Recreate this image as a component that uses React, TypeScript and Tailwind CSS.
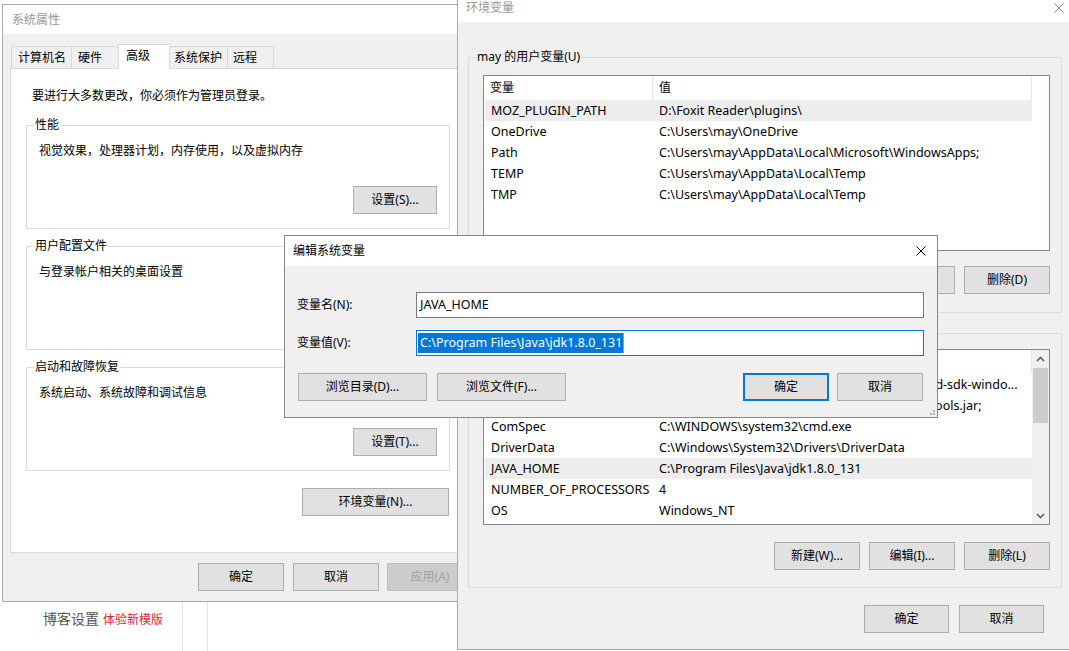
import React from "react";

type Row = [string, string];

const userRows: Row[] = [
  ["MOZ_PLUGIN_PATH", "D:\\Foxit Reader\\plugins\\"],
  ["OneDrive", "C:\\Users\\may\\OneDrive"],
  ["Path", "C:\\Users\\may\\AppData\\Local\\Microsoft\\WindowsApps;"],
  ["TEMP", "C:\\Users\\may\\AppData\\Local\\Temp"],
  ["TMP", "C:\\Users\\may\\AppData\\Local\\Temp"],
];

const sysRows: Row[] = [
  ["ANDROID_HOME", "D:\\Program Files (x86)\\Googles\\Android\\android-sdk-windo..."],
  ["CLASSPATH", ".;%JAVA_HOME%\\lib\\dt.jar;%JAVA_HOME%\\lib\\\\tools.jar;"],
  ["ComSpec", "C:\\WINDOWS\\system32\\cmd.exe"],
  ["DriverData", "C:\\Windows\\System32\\Drivers\\DriverData"],
  ["JAVA_HOME", "C:\\Program Files\\Java\\jdk1.8.0_131"],
  ["NUMBER_OF_PROCESSORS", "4"],
  ["OS", "Windows_NT"],
];

function Btn({
  label,
  className = "",
  disabled = false,
  primary = false,
}: {
  label: string;
  className?: string;
  disabled?: boolean;
  primary?: boolean;
}) {
  const tone = disabled
    ? "border border-[#bfbfbf] bg-[#cccccc] text-[#a0a0a0]"
    : primary
      ? "border-2 border-[#0078d7] bg-[#e1e1e1] text-black"
      : "border border-[#adadad] bg-[#e1e1e1] text-black";
  return (
    <div className={`flex h-[28px] shrink-0 items-center justify-center text-[12px] leading-[16px] ${tone} ${className}`}>
      {label}
    </div>
  );
}

function Group({
  label,
  className = "",
  children,
}: {
  label: string;
  className?: string;
  children?: React.ReactNode;
}) {
  return (
    <fieldset className={`flex flex-col border border-[#dcdcdc] ${className}`}>
      <legend className="ml-[7px] px-[1px] text-[12px] leading-[16px]">{label}</legend>
      {children}
    </fieldset>
  );
}

function Chevron({ up }: { up?: boolean }) {
  return (
    <svg width="9" height="6" viewBox="0 0 9 6" fill="none">
      <path
        d={up ? "M1 5 L4.5 1.5 L8 5" : "M1 1 L4.5 4.5 L8 1"}
        stroke="#606060"
        strokeWidth="1.6"
      />
    </svg>
  );
}

function ListView({ rows, hi, scroll }: { rows: Row[]; hi: number; scroll?: boolean }) {
  return (
    <div className="ml-[14px] flex h-[176px] w-[567px] shrink-0 border border-[#828790] bg-white text-[12.5px] leading-[16px]">
      <div className="w-[548px] overflow-hidden">
        <div className="flex h-[24px] text-[12px]">
          <div className="flex w-[169px] items-center border-r border-[#e5e5e5] pl-[6px]">变量</div>
          <div className="flex w-[379px] items-center border-r border-[#e5e5e5] pl-[6px]">值</div>
        </div>
        {rows.map(([k, v], i) => (
          <div
            key={k}
            className={`ml-[1px] flex h-[21px] items-center ${i === hi ? "bg-[#ededed]" : ""}`}
          >
            <div className="w-[168px] shrink-0 overflow-hidden whitespace-nowrap pl-[6px]">{k}</div>
            <div className="whitespace-nowrap pl-[6px]">{v}</div>
          </div>
        ))}
      </div>
      {scroll ? (
        <div className="flex w-[17px] flex-col bg-[#f0f0f0]">
          <div className="flex h-[17px] items-center justify-center">
            <Chevron up />
          </div>
          <div className="mx-[1px] mt-[1px] h-[55px] bg-[#cdcdcd]" />
          <div className="flex-1" />
          <div className="flex h-[17px] items-center justify-center">
            <Chevron />
          </div>
        </div>
      ) : null}
    </div>
  );
}

function CloseX({ color }: { color: string }) {
  return (
    <svg width="10" height="10" viewBox="0 0 10 10">
      <path d="M0.5 0.5 L9.5 9.5 M9.5 0.5 L0.5 9.5" stroke={color} strokeWidth="1" />
    </svg>
  );
}

function Tab({ label, className }: { label: string; className: string }) {
  return (
    <div className={`shrink-0 border-l border-t border-[#d9d9d9] pt-[3px] text-[12px] leading-[16px] ${className}`}>
      {label}
    </div>
  );
}

function SystemProperties() {
  return (
    <div className="absolute left-[2px] top-[4px] flex h-[598px] w-[471px] flex-col border border-[#aaaaaa] bg-[#f0f0f0]">
      <div className="flex h-[29px] shrink-0 items-center bg-white pl-[9px] text-[12px] text-[#999999]">系统属性</div>
      <div className="relative z-10 ml-[8px] mt-[10px] flex h-[24px] items-end">
        <Tab label="计算机名" className="h-[22px] w-[60px] pl-[6px]" />
        <Tab label="硬件" className="h-[22px] w-[47px] pl-[6px]" />
        <Tab label="高级" className="-mb-[1px] h-[25px] w-[51px] bg-white pl-[7px]" />
        <Tab label="系统保护" className="h-[22px] w-[58px] pl-[4px]" />
        <Tab label="远程" className="h-[22px] w-[47px] border-r pl-[5px]" />
      </div>
      <div className="ml-[7px] flex h-[485px] w-[452px] flex-col border border-[#d9d9d9] bg-white text-[12px] leading-[16px]">
        <div className="mt-[19px] pl-[21px]">要进行大多数更改，你必须作为管理员登录。</div>
        <Group label="性能" className="ml-[15px] mt-[13px] h-[112px] w-[424px]">
          <div className="mt-[10px] pl-[12px]">视觉效果，处理器计划，内存使用，以及虚拟内存</div>
          <Btn label="设置(S)..." className="mr-[12px] mt-[27px] w-[84px] self-end" />
        </Group>
        <Group label="用户配置文件" className="ml-[15px] mt-[9px] h-[112px] w-[424px]">
          <div className="mt-[10px] pl-[12px]">与登录帐户相关的桌面设置</div>
          <Btn label="设置(E)..." className="mr-[12px] mt-[27px] w-[84px] self-end" />
        </Group>
        <Group label="启动和故障恢复" className="ml-[15px] mt-[9px] h-[112px] w-[424px]">
          <div className="mt-[10px] pl-[12px]">系统启动、系统故障和调试信息</div>
          <Btn label="设置(T)..." className="mr-[12px] mt-[27px] w-[84px] self-end" />
        </Group>
        <Btn label="环境变量(N)..." className="ml-[291px] mt-[17px] w-[147px]" />
      </div>
      <div className="ml-[195px] mt-[10px] flex gap-[9px]">
        <Btn label="确定" className="w-[86px]" />
        <Btn label="取消" className="w-[86px]" />
        <Btn label="应用(A)" className="ml-[-1px] w-[86px]" disabled />
      </div>
    </div>
  );
}

function EnvironmentVariables() {
  return (
    <div className="absolute left-[457px] top-[-8px] flex h-[658px] w-[626px] flex-col border border-[#aaaaaa] bg-[#f0f0f0] text-[12px] leading-[16px]">
      <div className="flex h-[29px] shrink-0 items-center justify-between bg-white pl-[8px] pr-[18px] text-[#999999]">
        <span>环境变量</span>
        <CloseX color="#8a8a8a" />
      </div>
      <Group label="may 的用户变量(U)" className="ml-[10px] mt-[27px] h-[264px] w-[594px]">
        <div className="mt-[10px] flex">
          <ListView rows={userRows} hi={0} />
        </div>
        <div className="ml-[305px] mt-[15px] flex gap-[9px]">
          <Btn label="新建(N)..." className="w-[86px]" />
          <Btn label="编辑(E)..." className="w-[86px]" />
          <Btn label="删除(D)" className="w-[86px]" />
        </div>
      </Group>
      <Group label="系统变量(S)" className="ml-[10px] mt-[12px] h-[263px] w-[594px]">
        <div className="mt-[8px] flex">
          <ListView rows={sysRows} hi={4} scroll />
        </div>
        <div className="ml-[305px] mt-[17px] flex gap-[9px]">
          <Btn label="新建(W)..." className="w-[86px]" />
          <Btn label="编辑(I)..." className="w-[86px]" />
          <Btn label="删除(L)" className="w-[86px]" />
        </div>
      </Group>
      <div className="ml-[406px] mt-[17px] flex gap-[10px]">
        <Btn label="确定" className="w-[85px]" />
        <Btn label="取消" className="w-[85px]" />
      </div>
    </div>
  );
}

function EditDialog() {
  return (
    <div className="absolute left-[284px] top-[235px] flex h-[183px] w-[654px] flex-col border border-[#888888] bg-[#f0f0f0] text-[12px] leading-[16px]">
      <div className="flex h-[30px] shrink-0 items-center justify-between bg-white pl-[8px] pr-[11px] text-black">
        <span>编辑系统变量</span>
        <CloseX color="#000000" />
      </div>
      <div className="mt-[26px] flex items-center pl-[12px]">
        <div className="w-[119px]">变量名(N):</div>
        <div className="flex h-[26px] w-[508px] items-center border border-[#7a7a7a] bg-white pl-[3px] text-[12.5px]">JAVA_HOME</div>
      </div>
      <div className="mt-[12px] flex items-center pl-[12px]">
        <div className="w-[119px]">变量值(V):</div>
        <div className="flex h-[26px] w-[508px] items-center border border-[#0078d7] bg-white pl-[1px] text-[12.5px]">
          <span className="bg-[#0078d7] pl-[2px] pr-[1px] leading-[20px] text-white">C:\Program Files\Java\jdk1.8.0_131</span>
          <span className="h-[20px] w-[1px] bg-[#f08a24]" />
        </div>
      </div>
      <div className="mt-[17px] flex pl-[13px]">
        <Btn label="浏览目录(D)..." className="w-[129px]" />
        <Btn label="浏览文件(F)..." className="ml-[10px] w-[129px]" />
        <Btn label="确定" className="ml-[177px] w-[86px]" primary />
        <Btn label="取消" className="ml-[8px] w-[86px]" />
      </div>
      <div className="mr-[2px] mt-auto mb-[2px] grid grid-cols-3 gap-[1px] self-end">
        <span />
        <span />
        <span className="h-[2px] w-[2px] bg-[#b0b0b0]" />
        <span />
        <span className="h-[2px] w-[2px] bg-[#b0b0b0]" />
        <span className="h-[2px] w-[2px] bg-[#b0b0b0]" />
      </div>
    </div>
  );
}

export default function App() {
  return (
    <div className="relative flex h-[651px] w-[1069px] flex-col justify-end overflow-hidden bg-white font-['Noto_Sans','Noto_Sans_CJK_SC',sans-serif] text-black">
      <div className="flex h-[49px]">
        <div className="w-[183px] border-r border-[#e3e3e3] pl-[43px] pt-[4px]">
          <span className="text-[14px] leading-[20px] text-[#555555]">博客设置</span>
          <span className="ml-[4px] text-[12px] leading-[20px] text-[#e0262f]">体验新模版</span>
        </div>
        <div className="w-[25px] border-r border-[#e3e3e3]" />
      </div>
      <SystemProperties />
      <EnvironmentVariables />
      <EditDialog />
    </div>
  );
}
